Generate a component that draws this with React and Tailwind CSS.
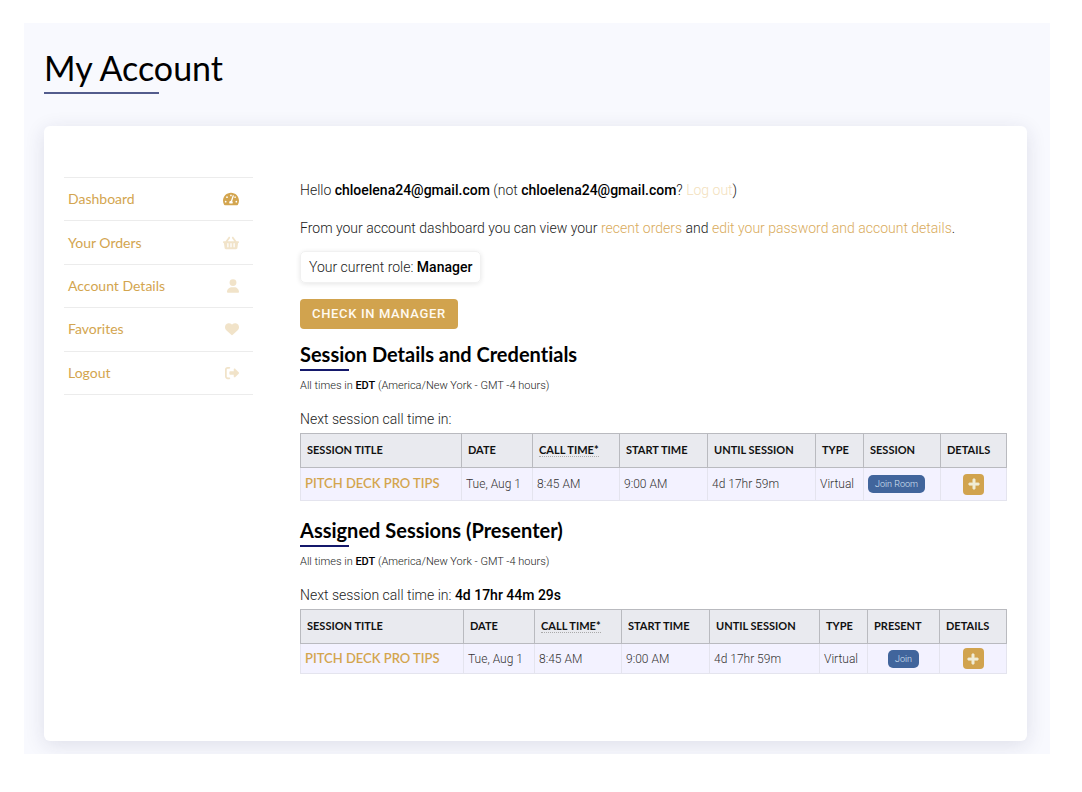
import React from 'react';
import { FaTachometerAlt, FaShoppingBasket, FaPlus } from 'react-icons/fa';
import { FaUser, FaHeart, FaRightFromBracket } from 'react-icons/fa6';

const menuItems = [
  { id: 'dashboard', name: 'Dashboard', icon: FaTachometerAlt, iconClass: 'h-4 w-4' },
  { id: 'orders', name: 'Your Orders', icon: FaShoppingBasket, iconClass: 'h-4 w-4 opacity-30' },
  { id: 'details', name: 'Account Details', icon: FaUser, iconClass: 'h-3.5 w-3 opacity-30' },
  { id: 'favorites', name: 'Favorites', icon: FaHeart, iconClass: 'h-3.5 w-3.5 opacity-30' },
  { id: 'logout', name: 'Logout', icon: FaRightFromBracket, iconClass: 'h-3.5 w-3.5 opacity-30' }
];

const detailColumns = [
  { name: 'Session Title', width: '' },
  { name: 'Date', width: 'w-[71px]' },
  { name: 'Call Time*', width: 'w-[87px]', hint: true },
  { name: 'Start Time', width: 'w-[88px]' },
  { name: 'Until Session', width: 'w-[108px]' },
  { name: 'Type', width: 'w-[48px]' },
  { name: 'Session', width: 'w-[77px]' },
  { name: 'Details', width: 'w-[66px]' }
];

const assignedColumns = [
  { name: 'Session Title', width: '' },
  { name: 'Date', width: 'w-[71px]' },
  { name: 'Call Time*', width: 'w-[87px]', hint: true },
  { name: 'Start Time', width: 'w-[88px]' },
  { name: 'Until Session', width: 'w-[110px]' },
  { name: 'Type', width: 'w-[48px]' },
  { name: 'Present', width: 'w-[72px]' },
  { name: 'Details', width: 'w-[67px]' }
];

function SideMenu() {
  return (
    <nav className="flex h-[218px] w-[189px] shrink-0 flex-col border-t border-[#ececec]">
      {menuItems.map((item) => (
        <a
          key={item.id}
          href={`#${item.id}`}
          className="flex flex-1 items-center justify-between border-b border-[#ececec] pl-1 pr-3.5 font-[Lato,sans-serif] text-sm font-normal text-[#d3a54f]"
        >
          {item.name}
          <item.icon className={item.iconClass} />
        </a>
      ))}
    </nav>
  );
}

function SessionTable({ columns, rowHeight, action, actionAlign }) {
  const cell = 'border border-[#e4e4ee] px-1 whitespace-nowrap';

  return (
    <table className="w-full table-fixed border-collapse bg-[#f3f2ff] text-xs text-[#333]">
      <thead>
        <tr className="h-[34px] bg-[#e9eaef]">
          {columns.map((column) => (
            <th
              key={column.name}
              className={`border border-[#b9babf] px-1.5 text-left font-[Lato,sans-serif] text-[11px] font-bold whitespace-nowrap text-[#111] uppercase ${column.width}`}
            >
              {column.hint ? (
                <span className="border-b border-dotted border-[#aaa]">{column.name}</span>
              ) : (
                column.name
              )}
            </th>
          ))}
        </tr>
      </thead>
      <tbody>
        <tr className={rowHeight}>
          <td className={cell}>
            <a href="#session" className="font-[Lato,sans-serif] text-[13px] font-semibold text-[#d3a54f]">
              PITCH DECK PRO TIPS
            </a>
          </td>
          <td className={cell}>Tue, Aug 1</td>
          <td className={cell}>8:45 AM</td>
          <td className={cell}>9:00 AM</td>
          <td className={cell}>4d 17hr 59m</td>
          <td className={cell}>Virtual</td>
          <td className={`${cell} ${actionAlign}`}>
            <button className="h-[18px] rounded-[5px] bg-[#41659c] px-[7px] text-[9px] text-[#d9e4f5]">
              {action}
            </button>
          </td>
          <td className={cell}>
            <button
              aria-label="Show details"
              className="mx-auto flex h-[21px] w-[21px] items-center justify-center rounded-sm bg-[#d1a34e] text-[#f0ecd6]"
            >
              <FaPlus className="h-3 w-3 stroke-current stroke-[30]" />
            </button>
          </td>
        </tr>
      </tbody>
    </table>
  );
}

function SessionSection({ title, countdown, ...table }) {
  return (
    <section>
      <h2 className="pb-0.5 font-[Lato,sans-serif] text-xl leading-[26px] font-bold text-black [font-variant-ligatures:none]">
        {title}
      </h2>
      <div className="h-0.5 w-[49px] bg-[#14186b]"></div>
      <p className="mt-1.5 text-[11px] leading-[18px]">
        All times in <b className="font-medium text-black">EDT</b> (America/New York - GMT -4 hours)
      </p>
      <p className="mt-3.5 mb-1 leading-5">
        Next session call time in: <b className="font-medium text-black">{countdown}</b>
      </p>
      <SessionTable {...table} />
    </section>
  );
}

function App() {
  return (
    <div className="bg-white pt-[23px] pr-8 pb-[38px] pl-6 font-[Roboto,sans-serif] text-sm font-light text-[#222]">
      <div className="overflow-hidden bg-[#f8f9fe] pt-[22px] pr-[23px] pb-[13px] pl-5">
        <h1 className="pb-0.5 font-[Lato,sans-serif] text-[34px] leading-[45px] font-normal text-black">My Account</h1>
        <div className="h-0.5 w-[115px] bg-[#535c8d]"></div>

        <div className="mt-8 flex gap-[47px] rounded-md bg-white pt-[51px] pr-5 pb-[67px] pl-5 shadow-[0_4px_20px_rgba(30,35,80,0.12)]">
          <SideMenu />

          <main className="min-w-0 flex-1">
            <p className="mt-0.5 leading-[22px]">
              Hello <b className="font-medium text-black">chloelena24@gmail.com</b> (not{' '}
              <b className="font-medium text-black">chloelena24@gmail.com</b>?{' '}
              <a href="#logout" className="text-[#f3dfbd]">Log out</a>)
            </p>
            <p className="mt-4 leading-[22px]">
              From your account dashboard you can view your{' '}
              <a href="#orders" className="text-[#d9ab5c]">recent orders</a> and{' '}
              <a href="#details" className="text-[#d9ab5c]">edit your password and account details</a>.
            </p>
            <p className="mt-3 w-fit rounded-[5px] border border-[#f1f1f1] px-2 py-1 leading-[22px] shadow-[0_1px_5px_rgba(0,0,0,0.1)]">
              Your current role: <b className="font-medium text-black">Manager</b>
            </p>
            <button className="mt-4 mb-3 block h-[30px] rounded-sm bg-[#d1a34e] px-3 text-[13px] font-medium tracking-wider text-[#fffaf0]">
              CHECK IN MANAGER
            </button>

            <SessionSection
              title="Session Details and Credentials"
              columns={detailColumns}
              rowHeight="h-[33px]"
              action="Join Room"
              actionAlign="text-left"
            />
            <div className="h-4"></div>
            <SessionSection
              title="Assigned Sessions (Presenter)"
              countdown="4d 17hr 44m 29s"
              columns={assignedColumns}
              rowHeight="h-[30px]"
              action="Join"
              actionAlign="text-center"
            />
          </main>
        </div>
      </div>
    </div>
  );
}

export default App;
